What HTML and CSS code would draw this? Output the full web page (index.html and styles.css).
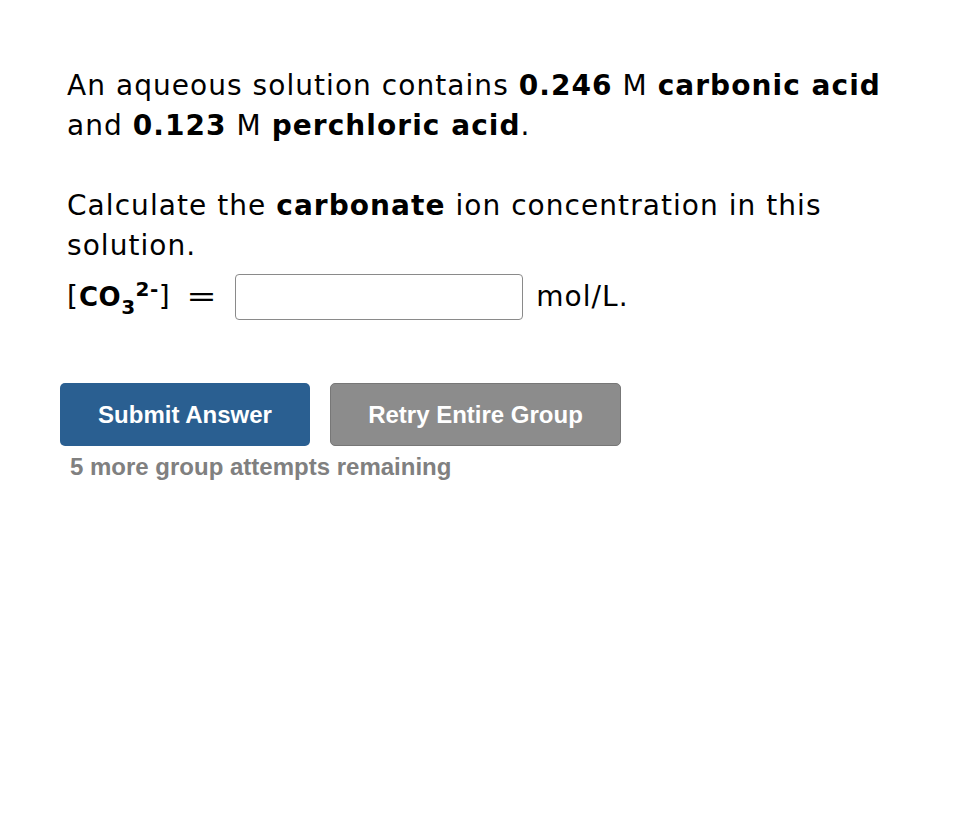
FILE: index.html
```
<!DOCTYPE html>
<html lang="en">
<head>
  <meta charset="UTF-8">
  <title>Carbonate ion concentration</title>
  <link rel="stylesheet" href="styles.css">
</head>
<body>
  <div class="question">
    <p>An aqueous solution contains <b>0.246</b> M <b>carbonic acid</b> and <b>0.123</b> M <b>perchloric acid</b>.</p>

    <p class="ask">Calculate the <b>carbonate</b> ion concentration in this solution.</p>

    <div class="answer-row">
      <span class="species">[<b class="formula">CO<sub>3</sub><sup>2-</sup></b>] <span class="eq">=</span></span>
      <input type="text" class="answer-box">
      <span class="unit">mol/L.</span>
    </div>
  </div>

  <div class="actions">
    <button class="btn btn-submit">Submit Answer</button>
    <button class="btn btn-retry">Retry Entire Group</button>
  </div>
  <div class="attempts">5 more group attempts remaining</div>
</body>
</html>
```

FILE: styles.css
```
body {
  margin: 0;
  background: #ffffff;
  color: #000000;
}

.question {
  font-family: "DejaVu Sans", Verdana, sans-serif;
  font-size: 28px;
  line-height: 40px;
  letter-spacing: 1.05px;
  padding: 66px 0 0 67px;
  width: 835px;
}

.question p {
  margin: 0 0 40px 0;
}

.question p.ask {
  margin-bottom: 8px;
}

.answer-row {
  display: flex;
  align-items: center;
  height: 46px;
}

.formula {
  font-size: 26px;
  letter-spacing: 0.5px;
}

.formula sub,
.formula sup {
  font-size: 20px;
  line-height: 0;
}

.formula sub {
  vertical-align: -8px;
}

.formula sup {
  vertical-align: 10px;
}

.eq {
  display: inline-block;
  margin-left: 9px;
  transform: scaleX(1.3);
}

.answer-box {
  width: 288px;
  height: 46px;
  box-sizing: border-box;
  margin: 0 13px 0 21px;
  border: 1.5px solid #8a8a8a;
  border-radius: 4px;
  outline: none;
  padding: 0 8px;
  font-size: 24px;
}

.actions {
  display: flex;
  gap: 20px;
  margin: 63px 0 0 60px;
}

.btn {
  font-family: "Liberation Sans", Arial, Helvetica, sans-serif;
  font-weight: bold;
  font-size: 24px;
  color: #ffffff;
  height: 63px;
  padding: 0;
  white-space: nowrap;
  border-radius: 5px;
  cursor: pointer;
}

.btn-submit {
  width: 250px;
  background-color: #2a5f91;
  border: none;
}

.btn-retry {
  width: 291px;
  background-color: #8c8c8c;
  border: 1.5px solid #777777;
}

.attempts {
  font-family: "Liberation Sans", Arial, Helvetica, sans-serif;
  font-weight: bold;
  font-size: 24px;
  line-height: 28px;
  color: #808080;
  margin: 7px 0 0 70px;
}
```
